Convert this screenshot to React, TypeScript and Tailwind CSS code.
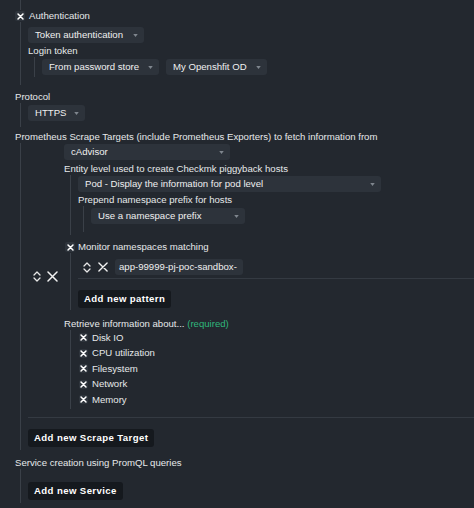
import React from 'react';

const line = 'border-l border-[#3a4048]';

function Check({ small }: { small?: boolean }) {
  return (
    <span className={`flex shrink-0 items-center justify-center rounded-[2px] bg-[#2e343c] ${small ? 'h-[9px] w-[9px]' : 'h-[10px] w-[10px]'}`}>
      <svg viewBox="0 0 10 10" className="h-[7px] w-[7px]">
        <path d="M1.5 1.5L8.5 8.5M8.5 1.5L1.5 8.5" stroke="#ffffff" strokeWidth="2.2" strokeLinecap="round" />
      </svg>
    </span>
  );
}

function Select({ w, children }: { w: string; children: React.ReactNode }) {
  return (
    <div className={`flex h-[16px] ${w} items-center justify-between rounded-[3px] bg-[#2d333b] pl-[7px] pr-[6px] text-[#f0f0f0]`}>
      <span className="whitespace-nowrap">{children}</span>
      <svg viewBox="0 0 6 4" className="h-[3px] w-[5px] shrink-0">
        <path d="M0 0H6L3 4Z" fill="#7f868e" />
      </svg>
    </div>
  );
}

function Btn({ children, className = '' }: { children: React.ReactNode; className?: string }) {
  return (
    <button className={`flex h-[18px] items-center rounded-[3px] bg-[#15191e] px-[6px] font-bold tracking-[0.4px] text-white ${className}`}>
      {children}
    </button>
  );
}

function Arrows() {
  return (
    <svg viewBox="0 0 8 11" className="h-[11px] w-[8px] shrink-0">
      <path d="M1 4L4 1L7 4M1 7L4 10L7 7" stroke="#e8e8e8" strokeWidth="1.3" fill="none" strokeLinecap="round" strokeLinejoin="round" />
    </svg>
  );
}

function Del({ size }: { size: string }) {
  return (
    <svg viewBox="0 0 11 11" className={`${size} shrink-0`}>
      <path d="M1 1L10 10M10 1L1 10" stroke="#f2f2f2" strokeWidth="1.5" strokeLinecap="round" />
    </svg>
  );
}

export default function App() {
  const metrics = ['Disk IO', 'CPU utilization', 'Filesystem', 'Network', 'Memory'];

  return (
    <div className="h-[508px] w-[474px] overflow-hidden bg-[#23282f] pl-[15px] font-['Liberation_Sans',Arial,sans-serif] text-[9.6px] leading-[12px] text-[#e6e8ea]">
      <div className={`ml-[5px] h-[10px] ${line}`} />

      {/* Authentication */}
      <div className="flex items-center gap-[4px]">
        <Check />
        <span>Authentication</span>
      </div>
      <div className={`ml-[5px] ${line} pb-[8px] pl-[7px] pt-[5px]`}>
        <Select w="w-[116px]">Token authentication</Select>
        <div className="mt-[2px]">Login token</div>
        <div className={`ml-[6px] ${line} py-[2px] pl-[7px]`}>
          <div className="flex gap-[7px]">
            <Select w="w-[117px]">From password store</Select>
            <Select w="w-[101px]">My Openshfit OD</Select>
          </div>
        </div>
      </div>

      {/* Protocol */}
      <div className="mt-[6px]">Protocol</div>
      <div className={`ml-[5px] ${line} pb-[6px] pl-[7px] pt-[2px]`}>
        <Select w="w-[57px]">HTTPS</Select>
      </div>

      {/* Scrape targets */}
      <div className="mt-[4px] whitespace-nowrap">
        Prometheus Scrape Targets (include Prometheus Exporters) to fetch information from
      </div>
      <div className={`ml-[5px] ${line} pb-[3px] pl-[7px] pt-[1px]`}>
        <div className="flex border-b border-[#343a42] pb-[8px]">
          <div className="flex w-[36px] shrink-0 items-center gap-[6px] pl-[5px]">
            <Arrows />
            <Del size="h-[11px] w-[11px]" />
          </div>
          <div className="flex-1">
            <Select w="w-[166px]">cAdvisor</Select>
            <div className="mt-[3px]">Entity level used to create Checkmk piggyback hosts</div>
            <div className={`ml-[6px] ${line} pb-[3px] pl-[7px] pt-[1px]`}>
              <Select w="w-[303px]">Pod - Display the information for pod level</Select>
              <div className="mt-[2px]">Prepend namespace prefix for hosts</div>
              <div className={`ml-[5px] ${line} pb-[8px] pl-[7px] pt-[2px]`}>
                <Select w="w-[154px]">Use a namespace prefix</Select>
              </div>
            </div>

            <div className="ml-px mt-[6px] flex items-center gap-[3px]">
              <Check />
              <span>Monitor namespaces matching</span>
            </div>
            <div className={`ml-[6px] ${line} pb-[2px] pl-[7px] pt-[6px]`}>
              <div className="flex items-center gap-[7px] border-b border-[#343a42] pb-[3px] pl-[5px]">
                <Arrows />
                <Del size="h-[10px] w-[10px]" />
                <div className="flex h-[16px] w-[128px] items-center rounded-[3px] bg-[#2d333b] pl-[4px] text-[#f0f0f0]">
                  app-99999-pj-poc-sandbox-
                </div>
              </div>
              <Btn className="mt-[11px]">Add new pattern</Btn>
            </div>

            <div className="mt-[8px]">
              Retrieve information about... <span className="text-[#2fb67c]">(required)</span>
            </div>
            <div className={`ml-[6px] ${line} pb-[1px] pl-[8px]`}>
              {metrics.map((m) => (
                <div key={m} className="flex h-[15.5px] items-center gap-[4px]">
                  <Check small />
                  <span>{m}</span>
                </div>
              ))}
            </div>
          </div>
        </div>
        <Btn className="mt-[11px]">Add new Scrape Target</Btn>
      </div>

      {/* Services */}
      <div className="mt-[7px]">Service creation using PromQL queries</div>
      <div className={`ml-[5px] ${line} pb-[3px] pl-[7px] pt-[13px]`}>
        <Btn>Add new Service</Btn>
      </div>
    </div>
  );
}
